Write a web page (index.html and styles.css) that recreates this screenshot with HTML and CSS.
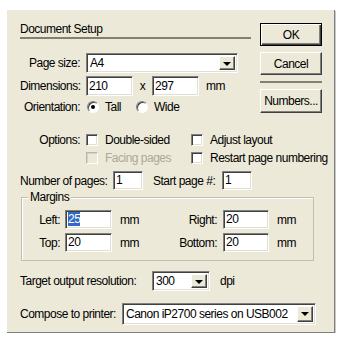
FILE: index.html
```html
<!DOCTYPE html>
<html lang="en">
<head>
    <meta charset="UTF-8">
    <title>Document Setup</title>
    <link rel="stylesheet" href="styles.css">
</head>
<body>
    <div class="dialog">
        <div class="top">
            <div class="main">
                <div class="heading">Document Setup</div>
                <div class="row first">
                    <span class="label">Page size:</span>
                    <div class="select size"><span class="value">A4</span><span class="drop"></span></div>
                </div>
                <div class="row gap">
                    <span class="label">Dimensions:</span>
                    <div class="field dim">210</div>
                    <span class="times">x</span>
                    <div class="field dim">297</div>
                    <span class="unit">mm</span>
                </div>
                <div class="row gap radios">
                    <span class="label">Orientation:</span>
                    <span class="radio checked"></span><span class="opt tall">Tall</span>
                    <span class="radio"></span><span class="opt">Wide</span>
                </div>
            </div>
            <div class="buttons">
                <button class="btn default">OK</button>
                <button class="btn">Cancel</button>
                <div class="separator"></div>
                <button class="btn numbers">Numbers...</button>
            </div>
        </div>

        <div class="options">
            <span class="label">Options:</span>
            <span class="check"><span class="box"></span>Double-sided</span>
            <span class="check"><span class="box"></span>Adjust layout</span>
            <span></span>
            <span class="check disabled"><span class="box"></span>Facing pages</span>
            <span class="check"><span class="box"></span>Restart page numbering</span>
        </div>

        <div class="row pages">
            <span class="pages-label">Number of pages:</span>
            <div class="field small">1</div>
            <span class="start-label">Start page #:</span>
            <div class="field small">1</div>
        </div>

        <div class="group">
            <span class="group-title">Margins</span>
            <div class="margins">
                <span class="m-label">Left:</span>
                <div class="field"><span class="sel">25</span></div>
                <span class="m-unit">mm</span>
                <span class="m-label right">Right:</span>
                <div class="field">20</div>
                <span class="m-unit">mm</span>
                <span class="m-label">Top:</span>
                <div class="field">20</div>
                <span class="m-unit">mm</span>
                <span class="m-label right">Bottom:</span>
                <div class="field">20</div>
                <span class="m-unit">mm</span>
            </div>
        </div>

        <div class="row target">
            <span class="target-label">Target output resolution:</span>
            <div class="select dpi"><span class="value">300</span><span class="drop"></span></div>
            <span class="unit-dpi">dpi</span>
        </div>

        <div class="row printer">
            <span class="printer-label">Compose to printer:</span>
            <div class="select printer-select"><span class="value">Canon iP2700 series on USB002</span><span class="drop"></span></div>
        </div>
    </div>
</body>
</html>
```

FILE: styles.css
```css
body {
    margin: 0;
    background-color: #fff;
    font-family: "Liberation Sans", Arial, sans-serif;
    font-size: 12px;
    letter-spacing: -0.5px;
    white-space: nowrap;
    color: #000;
}

.dialog {
    margin: 10px 0 0 7px;
    width: 328px;
    height: 323px;
    box-sizing: border-box;
    padding: 12px 0 0 13px;
    background-color: #ece9d8;
    border-right: 1px solid #808080;
    border-bottom: 1px solid #808080;
    box-shadow: 1px 1px 0 #c8c8c8;
}

.top {
    display: flex;
}

.main {
    width: 231px;
}

.heading {
    line-height: 14px;
    padding-bottom: 1px;
    border-bottom: 2px solid #857f6f;
}

.row {
    display: flex;
    align-items: center;
    height: 20px;
}

.row.first {
    margin-top: 14px;
}

.row.gap {
    margin-top: 3px;
}

.row.radios {
    height: 16px;
}

.label {
    width: 66px;
    flex-shrink: 0;
    box-sizing: border-box;
    padding-right: 6px;
    text-align: right;
}

/* sunken text field */
.field {
    box-sizing: border-box;
    height: 19px;
    line-height: 17px;
    padding-left: 2px;
    background-color: #fff;
    border: 1px solid;
    border-color: #808080 #fff #fff #808080;
    box-shadow: inset 1px 1px 0 #404040, inset -1px -1px 0 #e2dfd2;
}

.field.dim {
    width: 47px;
    height: 20px;
    line-height: 18px;
}

.times {
    width: 19px;
    text-align: center;
}

.unit {
    margin-left: 7px;
}

.select {
    display: flex;
    box-sizing: border-box;
    height: 20px;
    background-color: #fff;
    border: 1px solid;
    border-color: #808080 #fff #fff #808080;
    box-shadow: inset 1px 1px 0 #404040, inset -1px -1px 0 #e2dfd2;
    padding: 2px;
}

.select .value {
    flex: 1;
    line-height: 15px;
    padding-left: 1px;
    overflow: hidden;
}

.select .drop {
    position: relative;
    width: 16px;
    flex-shrink: 0;
    box-sizing: border-box;
    background-color: #ece9d8;
    border: 1px solid;
    border-color: #fff #404040 #404040 #fff;
    box-shadow: inset -1px -1px 0 #808080;
}

.select .drop::after {
    content: "";
    position: absolute;
    left: 3px;
    top: 5px;
    border-left: 4px solid transparent;
    border-right: 4px solid transparent;
    border-top: 4px solid #000;
}

.select.size {
    width: 152px;
}

.radio {
    position: relative;
    width: 12px;
    height: 12px;
    box-sizing: border-box;
    margin-left: 1px;
    border-radius: 50%;
    background-color: #fff;
    border: 1px solid;
    border-color: #808080 #fff #fff #808080;
    box-shadow: inset 1px 1px 0 #404040;
}

.radio.checked::after {
    content: "";
    position: absolute;
    left: 3px;
    top: 3px;
    width: 4px;
    height: 4px;
    border-radius: 50%;
    background-color: #000;
}

.opt {
    margin-left: 6px;
}

.opt.tall {
    margin-right: 14px;
}

.buttons {
    display: flex;
    flex-direction: column;
    width: 62px;
    margin-left: 9px;
    margin-top: 1px;
}

.btn {
    height: 23px;
    margin: 0 0 6px;
    padding: 0;
    font-family: inherit;
    font-size: inherit;
    letter-spacing: inherit;
    color: #000;
    background-color: #ece9d8;
    border: 1px solid;
    border-color: #fff #404040 #404040 #fff;
    box-shadow: inset -1px -1px 0 #808080;
}

.btn.default {
    border-color: #000;
    box-shadow: inset 1px 1px 0 #fff, inset -1px -1px 0 #404040, inset -2px -2px 0 #808080;
}

.btn.numbers {
    height: 24px;
}

.separator {
    height: 0;
    margin: 0 0 6px;
    border-top: 2px solid #857f6f;
}

.options {
    display: grid;
    grid-template-columns: 66px 105px auto;
    grid-auto-rows: 16px;
    row-gap: 2px;
    margin-top: 13px;
    align-items: center;
}

.check {
    display: flex;
    align-items: center;
}

.check .box {
    width: 12px;
    height: 12px;
    box-sizing: border-box;
    margin-right: 7px;
    background-color: #fff;
    border: 1px solid;
    border-color: #808080 #fff #fff #808080;
    box-shadow: inset 1px 1px 0 #404040, inset -1px -1px 0 #e2dfd2;
}

.check.disabled {
    color: #aca899;
}

.check.disabled .box {
    background-color: #ece9d8;
    border-color: #b9b6a8 #fff #fff #b9b6a8;
    box-shadow: inset 1px 1px 0 #d6d3c6;
}

.row.pages {
    margin-top: 5px;
    height: 19px;
}

.pages-label {
    width: 93px;
}

.field.small {
    width: 30px;
}

.start-label {
    width: 69px;
    margin-left: 10px;
}

.group {
    position: relative;
    width: 293px;
    height: 64px;
    box-sizing: border-box;
    margin: 7px 0 0 1px;
    padding-top: 12px;
    border: 1px solid #c2bfb1;
    box-shadow: inset 1px 1px 0 #fff;
}

.group-title {
    position: absolute;
    top: -8px;
    left: 6px;
    padding: 0 2px;
    background-color: #ece9d8;
}

.margins {
    display: grid;
    grid-template-columns: 43px 47px 55px 56px 46px auto;
    grid-auto-rows: 19px;
    row-gap: 4px;
    align-items: center;
}

.m-label {
    padding-right: 5px;
    text-align: right;
}

.m-label.right {
    padding-right: 6px;
}

.m-unit {
    padding-left: 8px;
}

.sel {
    background-color: #316ac5;
    color: #fff;
}

.row.target {
    margin-top: 10px;
}

.target-label {
    width: 132px;
}

.select.dpi {
    width: 58px;
}

.unit-dpi {
    margin-left: 10px;
}

.row.printer {
    margin-top: 12px;
    height: 22px;
}

.row.printer .select {
    height: 22px;
}

.row.printer .select .value {
    line-height: 17px;
}

.printer-label {
    width: 102px;
}

.select.printer-select {
    width: 194px;
}
```
